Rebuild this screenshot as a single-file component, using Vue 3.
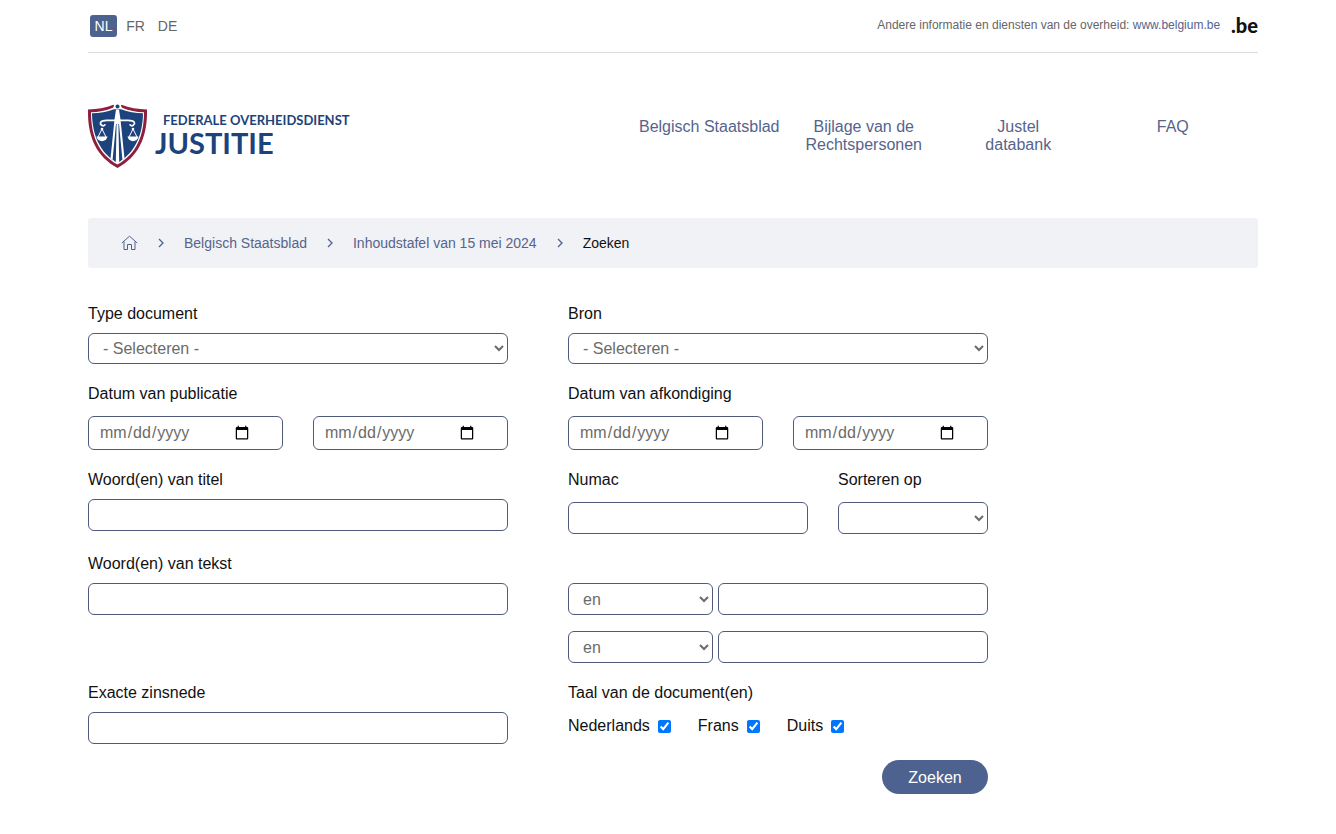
<script setup>
import { ref } from 'vue'

const languages = [
  { code: 'NL', active: true },
  { code: 'FR', active: false },
  { code: 'DE', active: false },
]

const menu = ['Belgisch Staatsblad', 'Bijlage van de Rechtspersonen', 'Justel databank', 'FAQ']

const trail = ['Belgisch Staatsblad', 'Inhoudstafel van 15 mei 2024']

const documentType = ref('')
const source = ref('')
const sort = ref('')
const operators = ref(['en', 'en'])
const documentLanguages = ref([
  { name: 'Nederlands', checked: true },
  { name: 'Frans', checked: true },
  { name: 'Duits', checked: true },
])
</script>

<template>
  <div class="page">
    <div class="container">
      <div class="topbar">
        <nav class="languages" aria-label="Taal">
          <a
            v-for="language in languages"
            :key="language.code"
            href="#"
            :class="{ active: language.active }"
          >{{ language.code }}</a>
        </nav>
        <div class="gov">
          <span class="gov-text">Andere informatie en diensten van de overheid: <a href="#">www.belgium.be</a></span>
          <span class="be">.be</span>
        </div>
      </div>

      <header class="header">
        <a class="brand" href="#">
          <svg class="shield" viewBox="0 0 59 64" aria-hidden="true">
            <path fill="#8e1f3d" d="M25.5 .8C18 4 9 5.2 0 5.4C-.6 31 7 52 29.5 64C52 52 59.6 31 59 5.4C50 5.2 41 4 33.5 .8L32 3.5H27Z" />
            <path fill="#fff" d="M25 3.7C18 6.8 10.5 8 3 8.2C3 31 10 49.5 29.5 60.5C49 49.5 56 31 56 8.2C48.5 8 41 6.8 34 3.7L32 0H27Z" />
            <path fill="#1c437b" d="M26 5.2C19 8 11.5 9 4 9.2C4.2 31 12 48.7 29.5 59.2C47 48.7 54.8 31 55 9.2C47.5 9 40 8 33 5.2Z" />
            <circle cx="29.5" cy="2.6" r="2" fill="#1c437b" />
            <path fill="#fff" d="M28 5.5H31L32.5 15.5L36.5 54.5L29.5 60L22.5 54.5L26.5 15.5Z" />
            <path fill="#1c437b" d="M28 20H28.6L27.8 58L24.6 55.5ZM31 20H30.4L31.2 58L34.4 55.5Z" />
            <path fill="none" stroke="#fff" stroke-width="1.7" stroke-linecap="round" d="M17 20.8C15 23 11.8 20.8 12.6 18.5C13.3 16.3 16 16.3 19 16.3H40C43 16.3 45.7 16.3 46.4 18.5C47.2 20.8 44 23 42 20.8" />
            <path fill="none" stroke="#fff" stroke-width="1" d="M14 25L10 33M14 25L18 33M45 25L41 33M45 25L49 33" />
            <path fill="#fff" d="M8.5 32.5H19.5C18.5 38.7 9.5 38.7 8.5 32.5ZM39.5 32.5H50.5C49.5 38.7 40.5 38.7 39.5 32.5Z" />
            <circle cx="14" cy="25" r="1.3" fill="#fff" />
            <circle cx="45" cy="25" r="1.3" fill="#fff" />
          </svg>
          <span class="brand-text">
            <span class="brand-top">FEDERALE OVERHEIDSDIENST</span>
            <span class="brand-name">JUSTITIE</span>
          </span>
        </a>
        <nav class="menu" aria-label="Hoofdmenu">
          <a v-for="item in menu" :key="item" href="#"><span>{{ item }}</span></a>
        </nav>
      </header>

      <nav class="breadcrumb" aria-label="Kruimelpad">
        <a href="#" aria-label="Home">
          <svg class="home" viewBox="0 0 17 16" aria-hidden="true">
            <path d="M.8 8L8.5 1.2L16.2 8M3 6.5V14.5H6.5V9.5H10.5V14.5H14V6.5" />
          </svg>
        </a>
        <svg class="chevron" viewBox="0 0 6 10" aria-hidden="true"><path d="M1 1L5 5L1 9" /></svg>
        <template v-for="step in trail" :key="step">
          <a href="#">{{ step }}</a>
          <svg class="chevron" viewBox="0 0 6 10" aria-hidden="true"><path d="M1 1L5 5L1 9" /></svg>
        </template>
        <span class="current">Zoeken</span>
      </nav>

      <form class="search" @submit.prevent>
        <div class="field">
          <label for="type">Type document</label>
          <select id="type" v-model="documentType" class="short">
            <option value="">- Selecteren -</option>
          </select>
        </div>
        <div class="field">
          <label for="source">Bron</label>
          <select id="source" v-model="source" class="short">
            <option value="">- Selecteren -</option>
          </select>
        </div>

        <div class="field loose">
          <label for="published-from">Datum van publicatie</label>
          <div class="pair">
            <input id="published-from" type="date">
            <input type="date" aria-label="Datum van publicatie tot">
          </div>
        </div>
        <div class="field loose">
          <label for="issued-from">Datum van afkondiging</label>
          <div class="pair">
            <input id="issued-from" type="date">
            <input type="date" aria-label="Datum van afkondiging tot">
          </div>
        </div>

        <div class="field">
          <label for="title-words">Woord(en) van titel</label>
          <input id="title-words" type="text">
        </div>
        <div class="number-sort">
          <div class="field loose">
            <label for="numac">Numac</label>
            <input id="numac" type="text">
          </div>
          <div class="field loose">
            <label for="sort">Sorteren op</label>
            <select id="sort" v-model="sort">
              <option value=""></option>
            </select>
          </div>
        </div>

        <div class="field">
          <label for="text-words">Woord(en) van tekst</label>
          <input id="text-words" type="text">
        </div>
        <div class="operators">
          <div v-for="(operator, index) in operators" :key="index" class="operator">
            <select v-model="operators[index]" aria-label="Operator">
              <option>en</option>
              <option>of</option>
            </select>
            <input type="text" aria-label="Bijkomend woord">
          </div>
        </div>

        <div class="field">
          <label for="phrase">Exacte zinsnede</label>
          <input id="phrase" type="text">
        </div>
        <fieldset>
          <legend>Taal van de document(en)</legend>
          <div class="checks">
            <label v-for="language in documentLanguages" :key="language.name">
              {{ language.name }}
              <input v-model="language.checked" type="checkbox">
            </label>
          </div>
        </fieldset>

        <div class="actions">
          <button type="submit">Zoeken</button>
        </div>
      </form>
    </div>
  </div>
</template>

<style>
body {
  margin: 0;
  background: #fff;
}
</style>

<style scoped>
* {
  box-sizing: border-box;
}

.page {
  padding: 0 0 40px 10px;
  font: 16px/22px "Liberation Sans", Arial, sans-serif;
  color: #111;
}

.container {
  max-width: 1170px;
  margin: 0 auto;
}

a {
  color: #56648c;
  text-decoration: none;
}

.topbar {
  display: flex;
  justify-content: space-between;
  align-items: center;
  height: 53px;
  border-bottom: 1px solid #dcdcdc;
}

.languages {
  display: flex;
  gap: 5px;
  padding-left: 2px;
  font-size: 14px;
  text-align: center;
}

.languages a {
  min-width: 27px;
  border-radius: 3px;
  color: #666;
}

.languages .active {
  background: #4d628f;
  color: #fff;
}

.gov {
  display: flex;
  align-items: center;
  gap: 11px;
  font-size: 12px;
  color: #666;
}

.gov-text {
  padding-bottom: 2px;
}

.be {
  padding-bottom: 2px;
  font: 900 20px/22px Lato, sans-serif;
  color: #111;
}

.header {
  display: flex;
  justify-content: space-between;
  padding: 51px 8px 50px 0;
}

.brand {
  display: flex;
  gap: 8px;
  color: #1c437b;
  font-family: Lato, sans-serif;
  font-weight: 700;
}

.shield {
  width: 59px;
  height: 64px;
}

.brand-text {
  display: flex;
  flex-direction: column;
  padding-top: 8px;
  white-space: nowrap;
}

.brand-top {
  padding-left: 8px;
  font-size: 13px;
  line-height: 16px;
}

.brand-name {
  font-size: 29px;
  line-height: 30px;
}

.menu {
  display: grid;
  grid-template-columns: repeat(4, 1fr);
  width: 618px;
  padding-top: 14px;
  line-height: 18px;
  text-align: center;
}

.menu span {
  display: inline-block;
  max-width: 142px;
}

.menu a:nth-child(3) span {
  max-width: 80px;
}

.breadcrumb {
  display: flex;
  align-items: center;
  gap: 20px;
  height: 50px;
  padding: 0 33px;
  border-radius: 3px;
  background: #f1f2f6;
  font-size: 14px;
}

.breadcrumb svg {
  display: block;
  fill: none;
  stroke: #4d628f;
}

.home {
  width: 17px;
  height: 16px;
}

.chevron {
  width: 6px;
  height: 10px;
  stroke-width: 1.3;
}

.current {
  color: #111;
}

.search {
  display: grid;
  grid-template-columns: 1fr 1fr;
  gap: 19px 60px;
  max-width: 900px;
  padding-top: 35px;
}

.field {
  display: flex;
  flex-direction: column;
  gap: 8px;
  min-width: 0;
}

.loose {
  gap: 11px;
}

select,
input[type="text"],
input[type="date"] {
  width: 100%;
  min-width: 0;
  height: 32px;
  margin: 0;
  padding: 0 10px;
  border: 1px solid #4f5b78;
  border-radius: 6px;
  background: #fff;
  color: #6b6b6b;
  font: inherit;
}

select.short {
  height: 31px;
}

select {
  padding: 0 0 0 10px;
}

input[type="date"] {
  height: 34px;
  padding-right: 30px;
}

.pair {
  display: grid;
  grid-template-columns: 1fr 1fr;
  gap: 30px;
}

.number-sort {
  display: grid;
  grid-template-columns: 240fr 150fr;
  gap: 30px;
}

.operators {
  display: flex;
  flex-direction: column;
  gap: 16px;
  padding-top: 30px;
}

.operator {
  display: grid;
  grid-template-columns: 145fr 270fr;
  gap: 5px;
}

fieldset {
  min-width: 0;
  margin: 0;
  padding: 0;
  border: 0;
}

legend {
  padding: 0;
}

.checks {
  display: flex;
  gap: 27px;
  padding-top: 11px;
}

.checks label {
  display: flex;
  align-items: center;
  gap: 8px;
}

.checks input {
  width: 13px;
  height: 13px;
  margin: 0;
}

.actions {
  grid-column: 1 / -1;
  display: flex;
  justify-content: flex-end;
  margin-top: -3px;
}

button {
  min-width: 106px;
  height: 34px;
  padding: 2px 26px 0;
  border: 0;
  border-radius: 17px;
  background: #4d628f;
  color: #fff;
  font: inherit;
}
</style>
